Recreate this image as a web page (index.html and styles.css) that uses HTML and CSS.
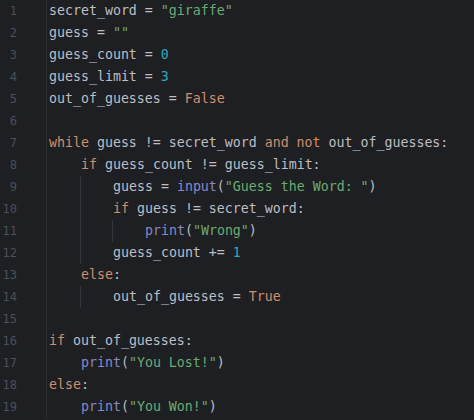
FILE: index.html
```html
<!DOCTYPE html>
<html>
<head>
<meta charset="utf-8">
<link rel="stylesheet" href="styles.css">
</head>
<body>
<div class="editor">
  <div class="line"><span class="num">1</span><span class="code">secret_word = <span class="s">"giraffe"</span></span></div>
  <div class="line"><span class="num">2</span><span class="code">guess = <span class="s">""</span></span></div>
  <div class="line"><span class="num">3</span><span class="code">guess_count = <span class="n">0</span></span></div>
  <div class="line"><span class="num">4</span><span class="code">guess_limit = <span class="n">3</span></span></div>
  <div class="line"><span class="num">5</span><span class="code">out_of_guesses = <span class="k">False</span></span></div>
  <div class="line"><span class="num">6</span><span class="code"></span></div>
  <div class="line"><span class="num">7</span><span class="code"><span class="k">while</span> guess != secret_word <span class="k">and not</span> out_of_guesses:</span></div>
  <div class="line"><span class="num">8</span><span class="code"><span class="ind"></span><span class="k">if</span> guess_count != guess_limit:</span></div>
  <div class="line"><span class="num">9</span><span class="code"><span class="ind"></span><span class="ind g"></span>guess = <span class="b">input</span>(<span class="s">"Guess the Word: "</span>)</span></div>
  <div class="line"><span class="num">10</span><span class="code"><span class="ind"></span><span class="ind g"></span><span class="k">if</span> guess != secret_word:</span></div>
  <div class="line"><span class="num">11</span><span class="code"><span class="ind"></span><span class="ind g"></span><span class="ind g"></span><span class="b">print</span>(<span class="s">"Wrong"</span>)</span></div>
  <div class="line"><span class="num">12</span><span class="code"><span class="ind"></span><span class="ind g"></span>guess_count += <span class="n">1</span></span></div>
  <div class="line"><span class="num">13</span><span class="code"><span class="ind"></span><span class="k">else</span>:</span></div>
  <div class="line"><span class="num">14</span><span class="code"><span class="ind"></span><span class="ind g"></span>out_of_guesses = <span class="k">True</span></span></div>
  <div class="line"><span class="num">15</span><span class="code"></span></div>
  <div class="line"><span class="num">16</span><span class="code"><span class="k">if</span> out_of_guesses:</span></div>
  <div class="line"><span class="num">17</span><span class="code"><span class="ind"></span><span class="b">print</span>(<span class="s">"You Lost!"</span>)</span></div>
  <div class="line"><span class="num">18</span><span class="code"><span class="k">else</span>:</span></div>
  <div class="line"><span class="num">19</span><span class="code"><span class="ind"></span><span class="b">print</span>(<span class="s">"You Won!"</span>)</span></div>
</div>
</body>
</html>
```
FILE: styles.css
```css
html, body {
  margin: 0;
  padding: 0;
  background: #1e1f22;
}
.editor {
  width: 474px;
  height: 420px;
  overflow: hidden;
  background: #1e1f22;
  font-family: "DejaVu Sans Mono", "Liberation Mono", monospace;
  color: #bcbec4;
}
.line {
  display: flex;
  height: 22px;
  line-height: 22px;
}
.num {
  width: 47px;
  flex: none;
  box-sizing: border-box;
  padding-right: 29px;
  text-align: right;
  font-size: 12px;
  color: #4b5059;
  border-right: 1px solid #2b2d30;
}
.code {
  padding-left: 2px;
  font-size: 13.28px;
  white-space: pre;
}
.ind {
  display: inline-block;
  width: 32px;
  height: 22px;
  vertical-align: top;
}
.ind.g {
  box-sizing: border-box;
  width: 33px;
  margin-left: -1px;
  border-left: 1px solid #33363b;
}
.k { color: #cf8e6d; }
.s { color: #6aab73; }
.n { color: #2aacb8; }
.b { color: #8888c6; }
```
